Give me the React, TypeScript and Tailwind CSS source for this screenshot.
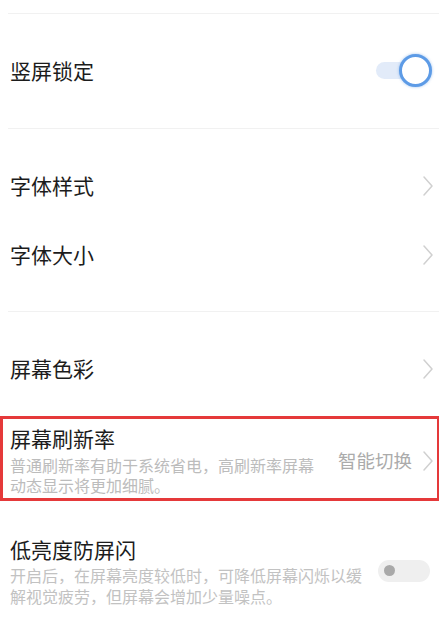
import React from 'react';

const Chevron: React.FC = () => (
  <svg width="12" height="22" viewBox="0 0 12 22" fill="none" className="shrink-0">
    <path d="M2 2 L10 11 L2 20" stroke="#d0d0d0" strokeWidth="1.5" strokeLinecap="round" strokeLinejoin="round" />
  </svg>
);

const Divider: React.FC = () => <div className="ml-2 h-px bg-[#f1f1f1]" />;

const ToggleOn: React.FC = () => (
  <div className="relative w-[56px] h-[34px] shrink-0">
    <div className="absolute left-0 top-[8px] w-[44px] h-[17px] rounded-full bg-[#e2ebf9]" />
    <div className="absolute right-0 top-0 w-[33px] h-[33px] rounded-full bg-white border-[3px] border-[#5d9be6] shadow-[0_0_3px_rgba(93,155,230,0.6)]" />
  </div>
);

const ToggleOff: React.FC = () => (
  <div className="flex items-center w-[52px] h-[22px] rounded-full bg-[#efefef] pl-[6px] shrink-0">
    <div className="w-[11px] h-[11px] rounded-full bg-[#a9a9a9]" />
  </div>
);

const NavRow: React.FC<{ title: string }> = ({ title }) => (
  <div className="flex items-center justify-between h-[69px] pl-[10px] pr-[5px]">
    <span className="text-[21px] text-[#1c1c1c]">{title}</span>
    <Chevron />
  </div>
);

const App: React.FC = () => {
  return (
    <div
      className="w-[439px] h-[640px] bg-white overflow-hidden"
      style={{ fontFamily: '"Noto Sans CJK SC", "Noto Sans", sans-serif' }}
    >
      <div className="h-[13px]" />
      <Divider />

      <div className="flex items-center justify-between h-[114px] pl-[10px] pr-[7px]">
        <span className="text-[21px] text-[#1c1c1c]">竖屏锁定</span>
        <ToggleOn />
      </div>
      <Divider />

      <div className="pt-[22px] pb-[22px]">
        <NavRow title="字体样式" />
        <NavRow title="字体大小" />
      </div>
      <Divider />

      <div className="flex items-center justify-between h-[104px] pl-[10px] pr-[5px] pt-[10px]">
        <span className="text-[21px] text-[#1c1c1c]">屏幕色彩</span>
        <Chevron />
      </div>

      <div className="h-[85px] w-[440px] border-[3px] border-[#e5393a] flex items-center justify-between pl-[7px] pr-[3px]">
        <div className="flex flex-col">
          <span className="text-[21px] leading-[30px] text-[#1c1c1c]">屏幕刷新率</span>
          <span className="mt-[2px] text-[16px] leading-[20px] text-[#bcbcbc] w-[310px]">
            普通刷新率有助于系统省电，高刷新率屏幕动态显示将更加细腻。
          </span>
        </div>
        <div className="flex items-center gap-[10px] mt-[4px]">
          <span className="text-[18.5px] text-[#ababab]">智能切换</span>
          <Chevron />
        </div>
      </div>

      <div className="flex items-center justify-between pl-[10px] pr-[9px] pt-[33px]">
        <div className="flex flex-col">
          <span className="text-[21px] leading-[30px] text-[#1c1c1c]">低亮度防屏闪</span>
          <span className="mt-[1px] text-[16px] leading-[21px] text-[#c2c2c2] w-[356px]">
            开启后，在屏幕亮度较低时，可降低屏幕闪烁以缓解视觉疲劳，但屏幕会增加少量噪点。
          </span>
        </div>
        <ToggleOff />
      </div>
    </div>
  );
};

export default App;
